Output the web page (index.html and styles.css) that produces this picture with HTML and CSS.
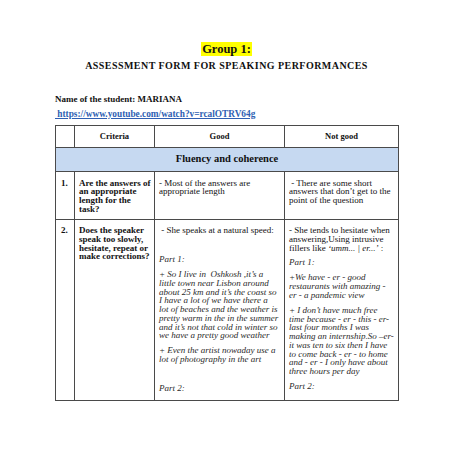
FILE: index.html
```html
<!DOCTYPE html>
<html>
<head>
<meta charset="utf-8">
<link rel="stylesheet" href="styles.css">
</head>
<body>
<div class="page">
  <div class="group"><span class="hl">Group 1:</span></div>
  <div class="title">ASSESSMENT FORM FOR SPEAKING PERFORMANCES</div>
  <div class="name">Name of the student: MARIANA</div>
  <div class="link"><a href="#">&nbsp;https://www.youtube.com/watch?v=rcalOTRV64g</a></div>
  <table class="form">
    <colgroup>
      <col class="c-num"><col class="c-crit"><col class="c-good"><col class="c-bad">
    </colgroup>
    <tr class="head">
      <th></th><th>Criteria</th><th>Good</th><th>Not good</th>
    </tr>
    <tr class="section">
      <td colspan="4">Fluency and coherence</td>
    </tr>
    <tr class="row1">
      <td class="num">1.</td>
      <td class="crit">Are the answers of<br>an appropriate<br>length for the<br>task?</td>
      <td class="txt"><p>- Most of the answers are<br>appropriate length</p></td>
      <td class="txt"><p>&nbsp;- There are some short<br>answers that don’t get to the<br>point of the question</p></td>
    </tr>
    <tr class="row2">
      <td class="num">2.</td>
      <td class="crit">Does the speaker<br>speak too slowly,<br>hesitate, repeat or<br>make corrections?</td>
      <td class="txt">
        <p>&nbsp;- She speaks at a natural speed:</p>
        <p class="blank">&nbsp;</p>
        <p class="it">Part 1:</p>
        <p class="it">+ So I live in &nbsp;Oshkosh ,it’s a<br>little town near Lisbon around<br>about 25 km and it’s the coast so<br>I have a lot of we have there a<br>lot of beaches and the weather is<br>pretty warm in the in the summer<br>and it’s not that cold in winter so<br>we have a pretty good weather</p>
        <p class="it">+ Even the artist nowaday use a<br>lot of photography in the art</p>
        <p class="blank">&nbsp;</p>
        <p class="it">Part 2:</p>
      </td>
      <td class="txt">
        <p>- She tends to hesitate when<br>answering,Using intrusive<br>fillers like <i>‘umm... | er...’</i> :</p>
        <p class="it">Part 1:</p>
        <p class="it">+We have - er - good<br>restaurants with amazing -<br>er - a pandemic view</p>
        <p class="it">+ I don’t have much free<br>time because - er - this - er-<br>last four months I was<br>making an internship.So –er-<br>it was ten to six then I have<br>to come back - er - to home<br>and - er - I only have about<br>three hours per day</p>
        <p class="it">Part 2:</p>
      </td>
    </tr>
  </table>
</div>
</body>
</html>
```
FILE: styles.css
```css
html, body {
  margin: 0;
  padding: 0;
  background: #ffffff;
}
body {
  font-family: "Liberation Serif", "Times New Roman", serif;
  color: #111;
}
.page {
  padding: 43px 0 0 55px;
  width: 343px;
}
.group {
  text-align: center;
  font-weight: bold;
  font-size: 12.5px;
  line-height: 12px;
  width: 343px;
}
.hl {
  background: #ffff00;
  padding: 0 1px;
}
.title {
  text-align: center;
  font-weight: bold;
  font-size: 10px;
  letter-spacing: 0.45px;
  line-height: 11px;
  margin-top: 5px;
  width: 343px;
  white-space: nowrap;
}
.name {
  font-weight: bold;
  font-size: 9px;
  line-height: 10px;
  margin-top: 23px;
}
.link {
  font-weight: bold;
  font-size: 9.3px;
  line-height: 10px;
  margin-top: 5px;
}
.link a {
  color: #2f5fb3;
  text-decoration: underline;
}
.form {
  margin-top: 6px;
  border-collapse: collapse;
  width: 343px;
  table-layout: fixed;
  font-size: 9px;
  line-height: 8.75px;
}
.c-num { width: 19px; }
.c-crit { width: 80px; }
.c-good { width: 130px; }
.c-bad { width: 114px; }
.form th, .form td {
  border: 1px solid #4a4a4a;
  vertical-align: top;
  padding: 0;
}
.head th {
  height: 21px;
  vertical-align: middle;
  text-align: center;
  font-weight: bold;
  font-size: 8.5px;
}
.section td {
  height: 23px;
  background: #c6d9f1;
  text-align: center;
  vertical-align: middle;
  font-weight: bold;
  font-size: 10.5px;
}
.num {
  font-weight: bold;
  padding: 6.5px 0 0 5px !important;
}
.crit {
  font-weight: bold;
  white-space: nowrap;
  padding: 6.5px 2px 5px 4px !important;
}
.txt {
  padding: 6.5px 3px 5px 4px !important;
}
.txt p {
  margin: 0 0 6.2px 0;
  white-space: nowrap;
}
.txt p:last-child {
  margin-bottom: 0;
}
.row1 td { height: 35px; }
.row2 .txt { padding-bottom: 7px !important; }
.it {
  font-style: italic;
  color: #2a2a2a;
}
.blank {
  line-height: 8px;
}
```
